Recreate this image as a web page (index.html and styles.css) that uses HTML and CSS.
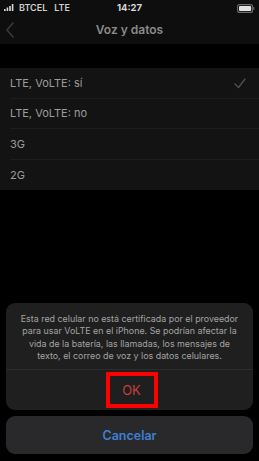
FILE: index.html
```html
<!DOCTYPE html>
<html lang="es">
<head>
<meta charset="utf-8">
<link rel="stylesheet" href="styles.css">
</head>
<body>
<div class="screen">
  <header class="top">
    <div class="status">
      <div class="status-left">
        <svg class="signal" width="10" height="7" viewBox="0 0 10 7">
          <rect x="0" y="5" width="1.6" height="2" fill="#d8d8d8"/>
          <rect x="2.6" y="3.5" width="1.6" height="3.5" fill="#d8d8d8"/>
          <rect x="5.2" y="2" width="1.6" height="5" fill="#d8d8d8"/>
          <rect x="7.8" y="0" width="1.6" height="7" fill="#d8d8d8"/>
        </svg>
        <span class="carrier">BTCEL</span>
        <span class="net">LTE</span>
      </div>
      <div class="time">14:27</div>
      <div class="status-right">
        <svg width="18" height="9" viewBox="0 0 18 9">
          <rect x="0.6" y="0.6" width="15" height="7.8" rx="2" fill="none" stroke="#6a6a6a" stroke-width="1.1"/>
          <rect x="2" y="2" width="12.2" height="5" rx="1" fill="#e0e0e0"/>
          <rect x="16.2" y="3" width="1.2" height="3" rx="0.5" fill="#6a6a6a"/>
        </svg>
      </div>
    </div>
    <div class="nav">
      <svg class="back" width="10" height="16" viewBox="0 0 10 16">
        <path d="M8 1 L2 8 L8 15" fill="none" stroke="#3a3a3a" stroke-width="1.6" stroke-linecap="round" stroke-linejoin="round"/>
      </svg>
      <div class="title">Voz y datos</div>
    </div>
  </header>

  <ul class="list">
    <li class="row"><span>LTE, VoLTE: sí</span>
      <svg class="check" width="12" height="11" viewBox="0 0 12 11">
        <path d="M1 6 L4.5 9.5 L11 1" fill="none" stroke="#4e4e4e" stroke-width="1.4" stroke-linecap="round" stroke-linejoin="round"/>
      </svg>
    </li>
    <li class="row"><span>LTE, VoLTE: no</span></li>
    <li class="row"><span>3G</span></li>
    <li class="row"><span>2G</span></li>
  </ul>

  <div class="sheet">
    <div class="alert">
      <p class="message">Esta red celular no está certificada por el proveedor<br>para usar VoLTE en el iPhone. Se podrían afectar la<br>vida de la batería, las llamadas, los mensajes de<br>texto, el correo de voz y los datos celulares.</p>
      <div class="ok-area">
        <div class="ok-box">OK</div>
      </div>
    </div>
    <div class="cancel">Cancelar</div>
  </div>
</div>
</body>
</html>
```

FILE: styles.css
```css
* { box-sizing: border-box; }
html, body {
  margin: 0;
  padding: 0;
  background: #000;
}
body {
  font-family: "Inter", "Liberation Sans", sans-serif;
  width: 259px;
  height: 461px;
  overflow: hidden;
}
.screen {
  position: relative;
  width: 259px;
  height: 461px;
  background: #000;
}
.top {
  background: #0e0e0e;
  height: 44px;
}
.status {
  height: 15px;
  display: flex;
  align-items: center;
  justify-content: space-between;
  padding: 0 4px 0 4px;
  position: relative;
}
.status-left {
  display: flex;
  align-items: center;
  gap: 3px;
  font-size: 9px;
  font-weight: 600;
  color: #cfcfcf;
}
.signal { margin-right: 2px; }
.net { margin-left: 4px; }
.time {
  position: absolute;
  left: 0;
  right: 0;
  text-align: center;
  font-size: 9.5px;
  font-weight: 700;
  color: #d6d6d6;
}
.status-right {
  display: flex;
  align-items: center;
  padding-top: 1px;
}
.nav {
  height: 29px;
  display: flex;
  align-items: center;
  justify-content: center;
  position: relative;
}
.back {
  position: absolute;
  left: 5px;
  top: 7px;
}
.title {
  font-size: 12px;
  font-weight: 600;
  color: #8a8a8a;
}
.list {
  list-style: none;
  margin: 24px 0 0 0;
  padding: 0 0 0 10px;
  background: #131313;
}
.row {
  height: 30.5px;
  display: flex;
  align-items: center;
  justify-content: space-between;
  padding-right: 13px;
  font-size: 11px;
  color: #9c9c9c;
  border-bottom: 1px solid #1d1d1d;
}
.row:last-child { border-bottom: none; }
.check { margin-top: 1px; }
.sheet {
  position: absolute;
  left: 6px;
  right: 6px;
  bottom: 7px;
  display: flex;
  flex-direction: column;
  gap: 6px;
}
.alert {
  background: #1f1f1f;
  border-radius: 9px;
  overflow: hidden;
}
.message {
  margin: 0;
  padding: 9.5px 4px 6px 4px;
  text-align: center;
  font-size: 8.9px;
  line-height: 12.6px;
  color: #a3a3a3;
  white-space: nowrap;
  border-bottom: 1px solid #2c2c2c;
}
.ok-area {
  height: 40px;
  display: flex;
  justify-content: center;
  align-items: center;
}
.ok-box {
  width: 52px;
  height: 36px;
  border: 4px solid #ff0000;
  display: flex;
  align-items: center;
  justify-content: center;
  font-size: 13px;
  color: #c3403b;
  margin-left: 4px;
}
.cancel {
  height: 38px;
  background: #29292b;
  border-radius: 9px;
  display: flex;
  align-items: center;
  justify-content: center;
  font-size: 12.5px;
  font-weight: 600;
  color: #3f7fd4;
}
```
